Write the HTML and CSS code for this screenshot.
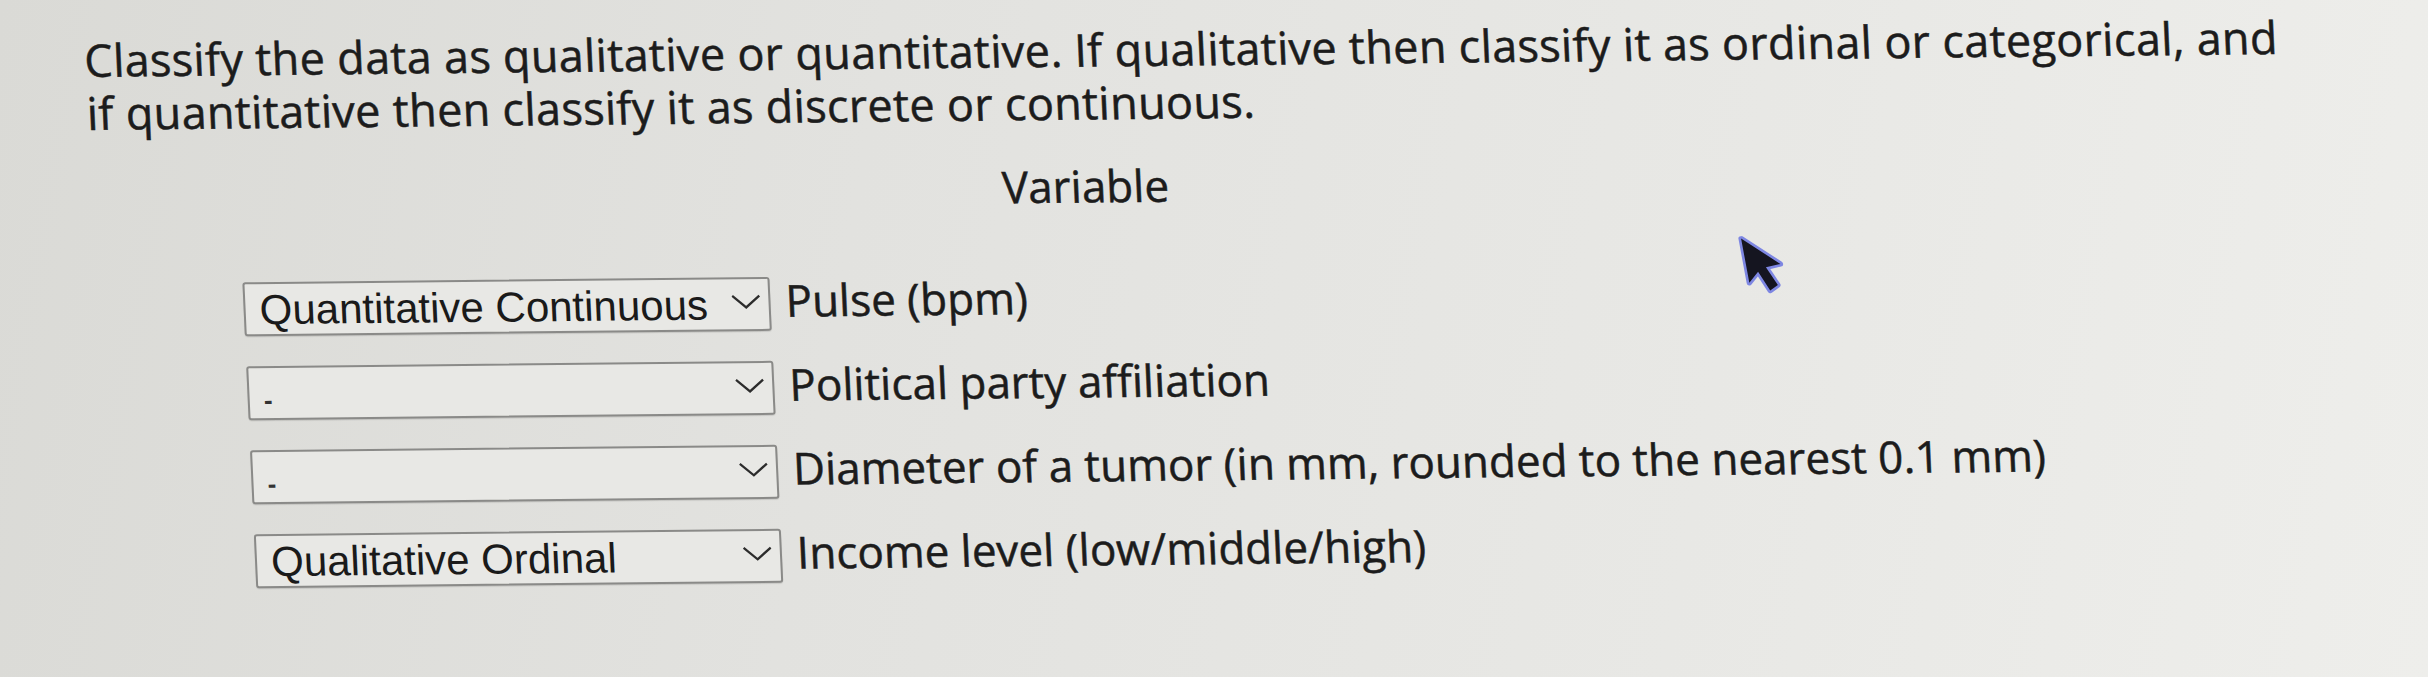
FILE: index.html
```html
<!DOCTYPE html>
<html lang="en">
<head>
<meta charset="utf-8">
<title>Classify the data</title>
<link rel="stylesheet" href="styles.css">
</head>
<body>
<div class="page">
  <p class="prompt">Classify the data as qualitative or quantitative. If qualitative then classify it as ordinal or categorical, and<br>if quantitative then classify it as discrete or continuous.</p>
  <div class="head">Variable</div>
  <div class="rows">
    <div class="row">
      <div class="pick">
        <select class="sel"><option>Quantitative Continuous</option></select>
        <svg class="chev" viewBox="0 0 30 14" aria-hidden="true"><polyline points="1,1 15,13 29,1"/></svg>
      </div>
      <span class="label">Pulse (bpm)</span>
    </div>
    <div class="row">
      <div class="pick">
        <select class="sel dash"><option>-</option></select>
        <svg class="chev" viewBox="0 0 30 14" aria-hidden="true"><polyline points="1,1 15,13 29,1"/></svg>
      </div>
      <span class="label">Political party affiliation</span>
    </div>
    <div class="row">
      <div class="pick">
        <select class="sel dash"><option>-</option></select>
        <svg class="chev" viewBox="0 0 30 14" aria-hidden="true"><polyline points="1,1 15,13 29,1"/></svg>
      </div>
      <span class="label">Diameter of a tumor (in mm, rounded to the nearest 0.1 mm)</span>
    </div>
    <div class="row">
      <div class="pick">
        <select class="sel"><option>Qualitative Ordinal</option></select>
        <svg class="chev" viewBox="0 0 30 14" aria-hidden="true"><polyline points="1,1 15,13 29,1"/></svg>
      </div>
      <span class="label">Income level (low/middle/high)</span>
    </div>
  </div>
  <svg class="cursor" viewBox="0 0 40 58" aria-hidden="true">
    <path class="glow" d="M4 2 L4 44 L14 35 L22 54 L30 50 L22 32 L36 31 Z"/>
    <path class="arrow" d="M4 2 L4 44 L14 35 L22 54 L30 50 L22 32 L36 31 Z"/>
  </svg>
</div>
</body>
</html>
```
FILE: styles.css
```css
html, body {
  margin: 0;
  padding: 0;
}
body {
  width: 2428px;
  height: 677px;
  overflow: hidden;
  background: linear-gradient(100deg, #dadad6 0%, #e2e2df 35%, #e8e8e5 70%, #eeeeeb 100%);
  color: #1c1c1c;
  font-family: "Open Sans", "Noto Sans", sans-serif;
}
.page {
  position: relative;
  height: 677px;
  padding: 33px 0 0 85px;
  box-sizing: border-box;
  transform-origin: 85px 77px;
  transform: rotate(-0.6deg) skewX(2deg);
}
.prompt {
  margin: 0;
  font-size: 45px;
  line-height: 53px;
  letter-spacing: 0.3px;
  -webkit-text-stroke: 0.5px #1c1c1c;
}
.head {
  width: 1990px;
  text-align: center;
  font-size: 44px;
  line-height: 50px;
  margin-top: 32px;
  -webkit-text-stroke: 0.5px #1c1c1c;
}
.rows {
  display: flex;
  flex-direction: column;
  gap: 30px;
  margin-top: 63px;
  padding-left: 148px;
}
.row {
  display: flex;
  align-items: flex-start;
  gap: 15px;
  height: 54px;
}
.pick {
  position: relative;
  width: 527px;
  height: 54px;
  flex: none;
}
.sel {
  appearance: none;
  -webkit-appearance: none;
  width: 100%;
  height: 100%;
  margin: 0;
  padding: 0 0 0 14px;
  border: 2px solid #8a8a88;
  border-radius: 3px;
  background: #e8e8e5;
  color: #1a1a1a;
  font-family: "Liberation Sans", Arial, sans-serif;
  font-size: 42px;
  box-sizing: border-box;
  box-shadow: 0 1px 1px rgba(0, 0, 0, 0.12);
}
.sel.dash {
  font-size: 26px;
  padding-top: 14px;
  font-weight: bold;
  color: #333;
}
.chev {
  position: absolute;
  right: 10px;
  top: 17px;
  width: 29px;
  height: 15px;
  fill: none;
  stroke: #2c2c2c;
  stroke-width: 2.4;
}
.label {
  font-size: 44px;
  line-height: 50px;
  margin-top: -2px;
  white-space: nowrap;
  -webkit-text-stroke: 0.5px #1c1c1c;
}
.cursor {
  position: absolute;
  left: 1732px;
  top: 251px;
  width: 44px;
  height: 62px;
  transform: rotate(-8deg);
}
.cursor .glow {
  fill: #3b46c8;
  stroke: #5a66e0;
  stroke-width: 5;
  stroke-linejoin: round;
  opacity: 0.75;
}
.cursor .arrow {
  fill: #151520;
}
```
